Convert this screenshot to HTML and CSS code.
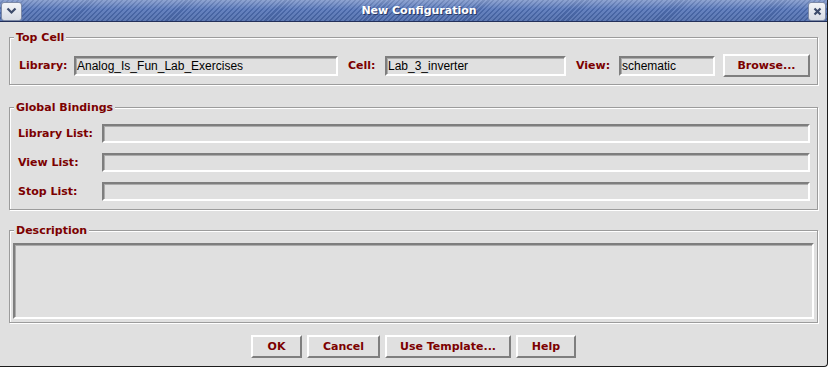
FILE: index.html
```html
<!DOCTYPE html>
<html lang="en">
<head>
  <meta charset="UTF-8" />
  <title>New Configuration</title>
  <link rel="stylesheet" href="styles.css">
</head>
<body>
  <div class="window">
    <div class="titlebar">
      <span class="tb-btn menu">
        <svg width="11" height="8" viewBox="0 0 11 8"><path d="M1.5 1.5 L5.5 5.5 L9.5 1.5" fill="none" stroke="#3d4b6b" stroke-width="2.2"/></svg>
      </span>
      <span class="title">New Configuration</span>
      <span class="tb-btn close">
        <svg width="9" height="9" viewBox="0 0 9 9"><path d="M1.5 1.5 L7.5 7.5 M7.5 1.5 L1.5 7.5" fill="none" stroke="#3d4b6b" stroke-width="2.2"/></svg>
      </span>
    </div>

    <div class="content">
      <fieldset class="group">
        <legend>Top Cell</legend>
        <div class="cell-row">
          <span class="lbl lbl-lib">Library:</span>
          <div class="field f-lib">Analog_Is_Fun_Lab_Exercises</div>
          <span class="lbl lbl-cell">Cell:</span>
          <div class="field f-cell">Lab_3_inverter</div>
          <span class="lbl lbl-view">View:</span>
          <div class="field f-view">schematic</div>
          <button class="btn browse">Browse...</button>
        </div>
      </fieldset>

      <fieldset class="group bindings">
        <legend>Global Bindings</legend>
        <div class="bind-grid">
          <span class="lbl">Library List:</span>
          <div class="field"></div>
          <span class="lbl">View List:</span>
          <div class="field"></div>
          <span class="lbl">Stop List:</span>
          <div class="field"></div>
        </div>
      </fieldset>

      <fieldset class="group desc">
        <legend>Description</legend>
        <div class="desc-body">
          <div class="field area"></div>
        </div>
      </fieldset>

      <div class="actions">
        <button class="btn b-ok">OK</button>
        <button class="btn b-cancel">Cancel</button>
        <button class="btn b-template">Use Template...</button>
        <button class="btn b-help">Help</button>
      </div>
    </div>
  </div>
</body>
</html>
```

FILE: styles.css
```css
body {
  margin: 0;
  background: #fff;
  font-family: "DejaVu Sans", sans-serif;
}
.window {
  width: 827px;
  height: 366px;
  background: #e0e0e0;
  border-right: 1px solid #1c1c1c;
  border-bottom: 1px solid #1c1c1c;
  border-bottom-right-radius: 4px;
  overflow: hidden;
}
.titlebar {
  height: 21px;
  border-bottom: 1px solid #23305a;
  display: flex;
  align-items: center;
  padding: 0 1px;
  background:
    linear-gradient(to bottom, rgba(255,255,255,0.28), rgba(255,255,255,0) 45%, rgba(0,0,0,0.08)),
    repeating-linear-gradient(135deg, #6582c0 0 2px, #4a68a8 2px 3.5px);
}
.tb-btn {
  box-sizing: border-box;
  height: 19px;
  margin-top: 1px;
  display: flex;
  align-items: center;
  justify-content: center;
  background: linear-gradient(to bottom, #f2f4f8, #d8dce4);
  border: 1px solid #7c89a6;
  border-radius: 3px;
}
.tb-btn.menu {
  width: 21px;
}
.tb-btn.close {
  width: 18px;
  margin-left: auto;
}
.title {
  flex: 1;
  text-align: center;
  padding-left: 8px;
  color: #fff;
  font-size: 11px;
  font-weight: bold;
  text-shadow: 1px 1px 0 #2a3a66;
}
.content {
  padding: 9px 9px 0 9px;
}
.group {
  margin: 0;
  padding: 0 3px;
  min-width: 0;
  border: 1px solid #9c9c9c;
  box-shadow: inset 1px 1px 0 #fff, 1px 1px 0 #fff;
}
.group legend {
  margin-left: 1px;
  padding: 0 2px;
  background: #e0e0e0;
  color: #7c0000;
  font-size: 11px;
  line-height: 13px;
  font-weight: bold;
}
.lbl {
  color: #7c0000;
  font-size: 11px;
  font-weight: bold;
  white-space: nowrap;
}
.field {
  box-sizing: border-box;
  height: 20px;
  border: 2px solid;
  border-color: #7e7e7e #fff #fff #7e7e7e;
  box-shadow: inset 1px 1px 0 #ababab;
  padding: 0 1px;
  font-family: "Liberation Sans", Arial, sans-serif;
  font-size: 12px;
  line-height: 16px;
  color: #000;
  white-space: nowrap;
  overflow: hidden;
}
.btn {
  box-sizing: border-box;
  height: 23px;
  padding: 0;
  border: 2px solid;
  border-color: #fff #7e7e7e #7e7e7e #fff;
  background: #e0e0e0;
  color: #7c0000;
  font-family: "DejaVu Sans", sans-serif;
  font-size: 11px;
  font-weight: bold;
}

/* top cell row */
.cell-row {
  display: flex;
  align-items: center;
  padding: 10px 4px 7px 6px;
}
.lbl-lib { width: 55px; }
.lbl-cell { width: 37px; margin-left: 10px; }
.lbl-view { width: 43px; margin-left: 10px; }
.f-lib { width: 264px; }
.f-cell { width: 181px; }
.f-view { width: 96px; }
.browse { width: 87px; margin-left: 8px; }

/* global bindings */
.bindings {
  margin-top: 16px;
}
.bind-grid {
  display: grid;
  grid-template-columns: 84px 1fr;
  grid-auto-rows: 19px;
  row-gap: 10px;
  align-items: center;
  padding: 10px 4px 8px 5px;
}
.bind-grid .field {
  height: 19px;
}

/* description */
.desc {
  margin-top: 14px;
}
.desc-body {
  padding: 6px 0 3px 0;
}
.field.area {
  height: 76px;
}

/* bottom buttons */
.actions {
  display: flex;
  justify-content: center;
  gap: 5px;
  margin-top: 12px;
}
.b-ok { width: 51px; }
.b-cancel { width: 73px; }
.b-template { width: 126px; }
.b-help { width: 60px; }
```
